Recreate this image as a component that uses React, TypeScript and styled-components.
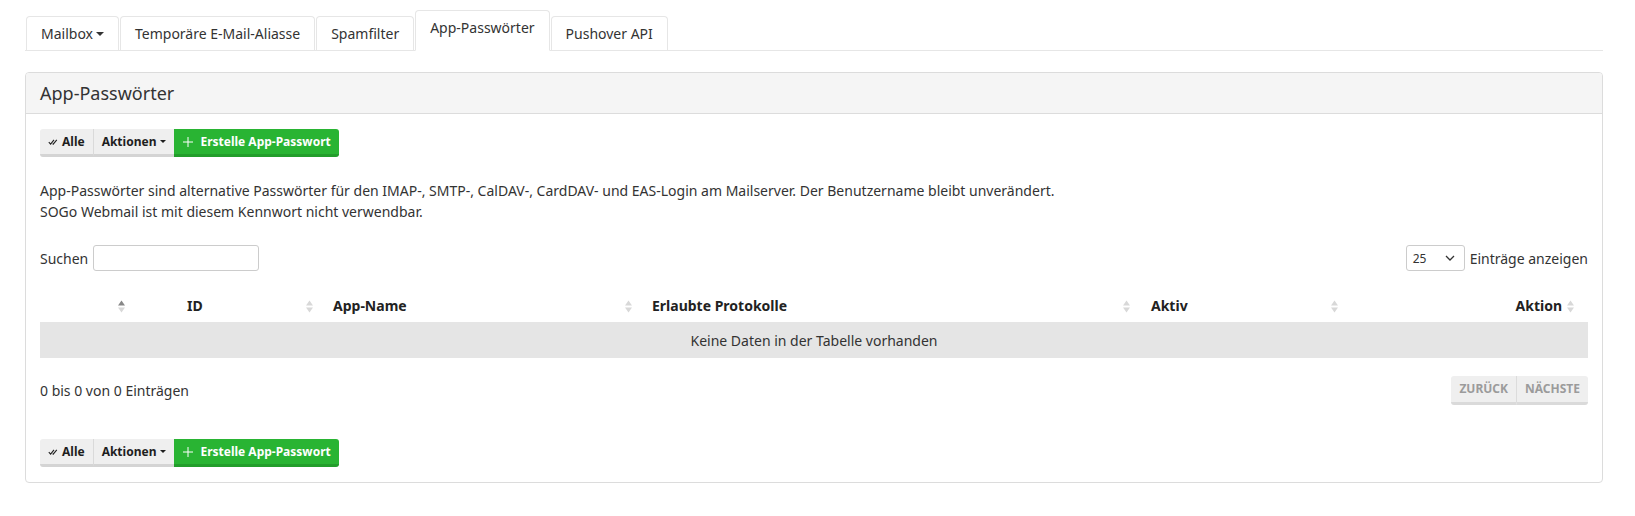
import React from "react";
import styled, { createGlobalStyle } from "styled-components";

const tabs = [
  { label: "Mailbox", caret: true },
  { label: "Temporäre E-Mail-Aliasse" },
  { label: "Spamfilter" },
  { label: "App-Passwörter", active: true },
  { label: "Pushover API" },
];

// edges measured from the reference: width, padding-left, arrow offset
const columns = [
  { title: "", width: 90, pl: 15, arrowRight: 5, sorted: true },
  { title: "ID", width: 188, pl: 57, arrowRight: 5 },
  { title: "App-Name", width: 319, pl: 15, arrowRight: 5 },
  { title: "Erlaubte Protokolle", width: 498, pl: 15, arrowRight: 5 },
  { title: "Aktiv", width: 208, pl: 16, arrowRight: 5 },
  { title: "Aktion", width: 245, pl: 15, arrowRight: 14, right: true },
];

const SortArrows: React.FC<{ sorted?: boolean; right: number }> = ({
  sorted,
  right,
}) => (
  <ArrowBox $right={right}>
    <svg width="7" height="13" viewBox="0 0 7 13">
      <polygon points="0,5.5 3.5,0.5 7,5.5" fill={sorted ? "#888" : "#d8d8d8"} />
      <polygon points="0,7.5 3.5,12.5 7,7.5" fill="#d8d8d8" />
    </svg>
  </ArrowBox>
);

const CheckAll = () => (
  <svg width="10" height="8" viewBox="0 0 10 8" fill="none">
    <polyline points="0.8,4.2 2.6,6.2 6,1.8" stroke="#222" strokeWidth="1.1" />
    <polyline points="4.6,5.6 5.2,6.2 8.8,1.8" stroke="#222" strokeWidth="1.1" />
  </svg>
);

const Plus = () => (
  <svg width="10" height="10" viewBox="0 0 10 10">
    <line x1="5" y1="0" x2="5" y2="10" stroke="#fff" strokeWidth="1" />
    <line x1="0" y1="5" x2="10" y2="5" stroke="#fff" strokeWidth="1" />
  </svg>
);

const ActionBar = () => (
  <BtnGroup>
    <GrayBtn>
      <CheckAll />
      Alle
    </GrayBtn>
    <GrayBtn>
      Aktionen
      <Caret $size={3} $gap={0} />
    </GrayBtn>
    <GreenBtn>
      <Plus />
      Erstelle App-Passwort
    </GreenBtn>
  </BtnGroup>
);

export default function App() {
  return (
    <>
      <GlobalStyle />
      <Page>
        <TabBar>
          {tabs.map((t) => (
            <Tab key={t.label} $active={!!t.active}>
              {t.label}
              {t.caret && <Caret $size={4} $gap={3} />}
            </Tab>
          ))}
        </TabBar>

        <Panel>
          <PanelHeading>App-Passwörter</PanelHeading>
          <PanelBody>
            <ActionBar />
            <Intro>
              App-Passwörter sind alternative Passwörter für den IMAP-, SMTP-,
              CalDAV-, CardDAV- und EAS-Login am Mailserver. Der Benutzername
              bleibt unverändert.
              <br />
              SOGo Webmail ist mit diesem Kennwort nicht verwendbar.
            </Intro>

            <TableTools>
              <ToolLabel>
                Suchen
                <SearchInput type="text" />
              </ToolLabel>
              <ToolLabel>
                <LengthSelect>
                  25
                  <svg width="10" height="6" viewBox="0 0 10 6" fill="none">
                    <polyline points="1,1 5,5 9,1" stroke="#333" strokeWidth="1.3" />
                  </svg>
                </LengthSelect>
                Einträge anzeigen
              </ToolLabel>
            </TableTools>

            <Table>
              <colgroup>
                {columns.map((c, i) => (
                  <col key={i} style={{ width: c.width }} />
                ))}
              </colgroup>
              <thead>
                <tr>
                  {columns.map((c, i) => (
                    <Th key={i} $pl={c.pl} $right={!!c.right}>
                      {c.title}
                      <SortArrows sorted={c.sorted} right={c.arrowRight} />
                    </Th>
                  ))}
                </tr>
              </thead>
              <tbody>
                <tr>
                  <EmptyCell colSpan={6}>
                    Keine Daten in der Tabelle vorhanden
                  </EmptyCell>
                </tr>
              </tbody>
            </Table>

            <TableFooter>
              <span>0 bis 0 von 0 Einträgen</span>
              <Pager>
                <PageBtn>Zurück</PageBtn>
                <PageBtn>Nächste</PageBtn>
              </Pager>
            </TableFooter>

            <BottomBar>
              <ActionBar />
            </BottomBar>
          </PanelBody>
        </Panel>
      </Page>
    </>
  );
}

const GlobalStyle = createGlobalStyle`
  body {
    margin: 0;
    background: #fff;
    color: #333;
    font-family: "Noto Sans", "Open Sans", sans-serif;
    font-size: 14px;
  }
`;

const Page = styled.div`
  padding: 10px 32px 20px 25px;
`;

const TabBar = styled.div`
  display: flex;
  align-items: flex-end;
  padding-left: 1px;
  border-bottom: 1px solid #e6e6e6;
`;

const Tab = styled.div<{ $active: boolean }>`
  display: flex;
  align-items: center;
  margin-right: 1px;
  margin-bottom: ${(p) => (p.$active ? "-1px" : "0")};
  padding: 7px 14px ${(p) => (p.$active ? "12px" : "6px")};
  line-height: 20px;
  font-size: 14px;
  color: #333;
  background: #fff;
  border: 1px solid #e6e6e6;
  border-bottom: ${(p) => (p.$active ? "1px solid #fff" : "none")};
  border-radius: 4px 4px 0 0;
`;

const Caret = styled.span<{ $size: number; $gap: number }>`
  display: inline-block;
  margin-left: ${(p) => p.$gap}px;
  border-left: ${(p) => p.$size}px solid transparent;
  border-right: ${(p) => p.$size}px solid transparent;
  border-top: ${(p) => p.$size}px solid currentColor;
`;

const Panel = styled.div`
  margin-top: 21px;
  border: 1px solid #dcdcdc;
  border-radius: 4px;
  background: #fff;
`;

const PanelHeading = styled.h3`
  margin: 0;
  padding: 9px 14px;
  font-size: 18px;
  font-weight: 400;
  line-height: 22px;
  color: #333;
  background: #f5f5f5;
  border-bottom: 1px solid #dcdcdc;
  border-radius: 3px 3px 0 0;
`;

const PanelBody = styled.div`
  padding: 15px 14px 15px;
`;

const BtnGroup = styled.div`
  display: flex;
  width: max-content;
`;

const BaseBtn = styled.div`
  display: flex;
  align-items: center;
  gap: 4px;
  height: 25px;
  padding: 0 8px;
  font-size: 12px;
  font-weight: 700;
  line-height: 17px;
  border-bottom: 3px solid;
`;

const GrayBtn = styled(BaseBtn)`
  color: #1e1e1e;
  background: #efefef;
  border-bottom-color: #d4d4d4;
  & + & {
    border-left: 1px solid #dadada;
  }
  &:first-child {
    border-radius: 3px 0 0 3px;
  }
`;

const GreenBtn = styled(BaseBtn)`
  gap: 7px;
  padding: 0 8px 0 9px;
  color: #fff;
  background: #29b433;
  border-bottom-color: #229d2b;
  border-radius: 0 3px 3px 0;
`;

const Intro = styled.p`
  margin: 23px 0 0;
  line-height: 21px;
`;

const TableTools = styled.div`
  display: flex;
  justify-content: space-between;
  align-items: center;
  margin-top: 23px;
`;

const ToolLabel = styled.label`
  display: flex;
  align-items: center;
  gap: 5px;
`;

const SearchInput = styled.input`
  width: 166px;
  height: 26px;
  box-sizing: border-box;
  border: 1px solid #ccc;
  border-radius: 3px;
`;

const LengthSelect = styled.div`
  display: flex;
  align-items: center;
  justify-content: space-between;
  box-sizing: border-box;
  width: 59px;
  height: 26px;
  padding: 0 9px 0 6px;
  font-size: 12px;
  border: 1px solid #ccc;
  border-radius: 3px;
`;

const Table = styled.table`
  width: 100%;
  margin-top: 22px;
  table-layout: fixed;
  border-collapse: collapse;
`;

const Th = styled.th<{ $pl: number; $right: boolean }>`
  position: relative;
  padding: 3px ${(p) => (p.$right ? 26 : 15)}px 6px ${(p) => p.$pl}px;
  line-height: 20px;
  font-size: 14px;
  font-weight: 700;
  color: #222;
  text-align: ${(p) => (p.$right ? "right" : "left")};
`;

const ArrowBox = styled.span<{ $right: number }>`
  position: absolute;
  right: ${(p) => p.$right}px;
  top: 7px;
  display: flex;
`;

const EmptyCell = styled.td`
  height: 36px;
  padding: 0;
  text-align: center;
  background: #e5e5e5;
`;

const TableFooter = styled.div`
  display: flex;
  justify-content: space-between;
  align-items: center;
  margin-top: 18px;
`;

const Pager = styled.div`
  display: flex;
`;

const PageBtn = styled.div`
  height: 26px;
  padding: 0 8px;
  font-size: 12px;
  font-weight: 700;
  line-height: 26px;
  text-transform: uppercase;
  color: #9b9b9b;
  background: #efefef;
  border-bottom: 3px solid #dadada;
  & + & {
    border-left: 1px solid #dcdcdc;
  }
  &:first-child {
    border-radius: 3px 0 0 3px;
  }
  &:last-child {
    border-radius: 0 3px 3px 0;
  }
`;

const BottomBar = styled.div`
  margin-top: 34px;
`;
